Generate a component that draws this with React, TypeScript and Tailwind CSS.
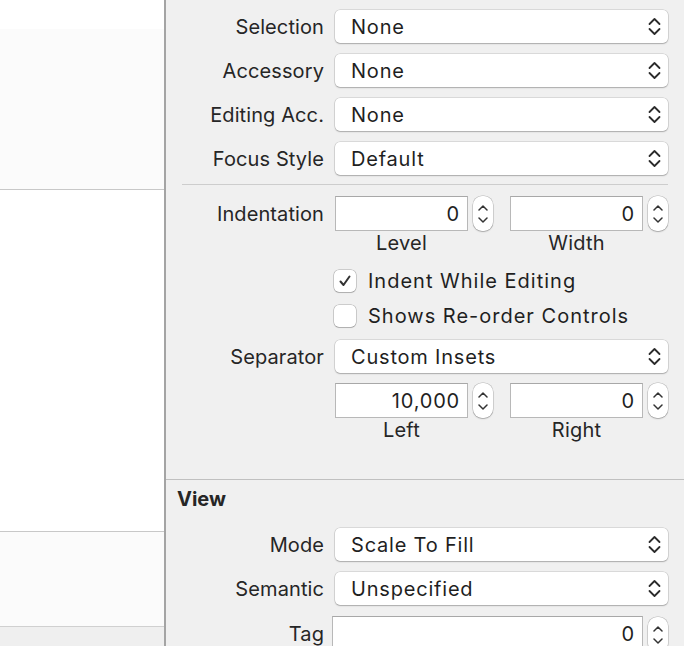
import React from "react";

const font = { fontFamily: "Inter, 'Liberation Sans', sans-serif" };

function UpDown() {
  return (
    <svg width="13" height="19" viewBox="0 0 13 19" fill="none" stroke="#2b2b2b" strokeWidth="1.8" strokeLinecap="round" strokeLinejoin="round">
      <path d="M1.5 7 L6.5 2 L11.5 7" />
      <path d="M1.5 12 L6.5 17 L11.5 12" />
    </svg>
  );
}

function Popup({ value }: { value: string }) {
  return (
    <div className="h-[33px] flex-1 bg-white rounded-[5px] shadow-[0_0_0_0.5px_rgba(0,0,0,0.18),0_1px_1.5px_rgba(0,0,0,0.22)] flex items-center pl-[16px] pr-[7px] text-[20px] tracking-[0.04em] text-[#1f1f1f]">
      <span className="flex-1">{value}</span>
      <UpDown />
    </div>
  );
}

function Stepper() {
  return (
    <div className="w-[20px] h-[35px] bg-white rounded-[9px] shadow-[0_0_0_0.5px_rgba(0,0,0,0.22),0_1px_1.5px_rgba(0,0,0,0.2)] flex flex-col items-center justify-center gap-[6px]">
      <svg width="10" height="6" viewBox="0 0 10 6" fill="none" stroke="#333" strokeWidth="1.5" strokeLinecap="round" strokeLinejoin="round">
        <path d="M1 5 L5 1 L9 5" />
      </svg>
      <svg width="10" height="6" viewBox="0 0 10 6" fill="none" stroke="#333" strokeWidth="1.5" strokeLinecap="round" strokeLinejoin="round">
        <path d="M1 1 L5 5 L9 1" />
      </svg>
    </div>
  );
}

function NumField({ value, w = "w-[133px]" }: { value: string; w?: string }) {
  return (
    <div className={`${w} h-[35px] shrink-0 bg-white border border-[#b8b8b8] border-t-[#a8a8a8] flex items-center justify-end pr-[7px] text-[20px] tracking-[0.04em] text-[#1f1f1f]`}>
      {value}
    </div>
  );
}

function Label({ children }: { children: React.ReactNode }) {
  return <div className="w-[158px] shrink-0 text-right text-[20px] tracking-[0.005em] text-[#262626]">{children}</div>;
}

function PopupRow({ label, value }: { label: string; value: string }) {
  return (
    <div className="flex items-center h-[33px] shrink-0">
      <Label>{label}</Label>
      <div className="w-[11px] shrink-0" />
      <Popup value={value} />
    </div>
  );
}

function Checkbox({ checked, label }: { checked: boolean; label: string }) {
  return (
    <div className="flex items-center h-[22px] pl-[168px] shrink-0">
      <div className="w-[22px] h-[22px] bg-white rounded-[5px] shadow-[0_0_0_0.5px_rgba(0,0,0,0.3),0_1px_1px_rgba(0,0,0,0.15)] flex items-center justify-center">
        {checked && (
          <svg width="14" height="14" viewBox="0 0 14 14" fill="none" stroke="#333" strokeWidth="2" strokeLinecap="round" strokeLinejoin="round">
            <path d="M2.5 7.5 L5.5 11 L11.5 2.5" />
          </svg>
        )}
      </div>
      <span className="ml-[12px] text-[20px] tracking-[0.05em] text-[#1f1f1f]">{label}</span>
    </div>
  );
}

function PairRow({ label, a, b, la, lb }: { label?: string; a: string; b: string; la: string; lb: string }) {
  return (
    <div className="flex flex-col shrink-0">
      <div className="flex items-center h-[35px]">
        <Label>{label ?? ""}</Label>
        <div className="w-[11px] shrink-0" />
        <NumField value={a} />
        <div className="w-[5px]" />
        <Stepper />
        <div className="w-[17px]" />
        <NumField value={b} />
        <div className="w-[5px]" />
        <Stepper />
      </div>
      <div className="flex h-[24px] items-center text-[20px] tracking-[0.01em] text-[#262626]">
        <div className="w-[169px] shrink-0" />
        <div className="w-[133px] text-center">{la}</div>
        <div className="w-[42px]" />
        <div className="w-[133px] text-center">{lb}</div>
      </div>
    </div>
  );
}

export default function App() {
  return (
    <div className="w-[684px] h-[646px] flex overflow-hidden bg-[#f0f0f0]" style={font}>
      {/* left panel */}
      <div className="w-[164px] shrink-0 flex flex-col">
        <div className="h-[29px] shrink-0 bg-white" />
        <div className="h-[161px] shrink-0 bg-[#fbfbfb] border-b border-[#c8c8c8]" />
        <div className="h-[342px] shrink-0 bg-white border-b border-[#c8c8c8]" />
        <div className="h-[95px] shrink-0 bg-[#fbfbfb] border-b border-[#d0d0d0] shadow-[0_1px_1px_rgba(0,0,0,0.06)]" />
        <div className="flex-1 bg-[#efefef]" />
      </div>
      <div className="w-[2px] shrink-0 bg-[#a4a4a4]" />
      {/* right panel */}
      <div className="flex-1 flex flex-col bg-[#f0f0f0] pr-[16px]">
        <div className="flex flex-col gap-[11px] pt-[10px] shrink-0">
          <PopupRow label="Selection" value="None" />
          <PopupRow label="Accessory" value="None" />
          <PopupRow label="Editing Acc." value="None" />
          <PopupRow label="Focus Style" value="Default" />
        </div>
        <div className="ml-[16px] mt-[9px] h-px shrink-0 bg-[#cdcdcd]" />
        <div className="mt-[11px] shrink-0">
          <PairRow label="Indentation" a="0" b="0" la="Level" lb="Width" />
        </div>
        <div className="mt-[15px] flex flex-col gap-[13px] shrink-0">
          <Checkbox checked label="Indent While Editing" />
          <Checkbox checked={false} label="Shows Re-order Controls" />
        </div>
        <div className="mt-[13px] shrink-0">
          <PopupRow label="Separator" value="Custom Insets" />
        </div>
        <div className="mt-[10px] shrink-0">
          <PairRow a="10,000" b="0" la="Left" lb="Right" />
        </div>
        <div className="-mr-[16px] mt-[37px] h-px shrink-0 bg-[#c0c0c0]" />
        <div className="pl-[11px] mt-[8px] h-[22px] shrink-0 flex items-center text-[20px] font-bold text-[#262626]">View</div>
        <div className="mt-[18px] flex flex-col gap-[11px] shrink-0">
          <PopupRow label="Mode" value="Scale To Fill" />
          <PopupRow label="Semantic" value="Unspecified" />
        </div>
        <div className="mt-[11px] flex items-center h-[35px] shrink-0">
          <Label>Tag</Label>
          <div className="w-[8px] shrink-0" />
          <NumField value="0" w="w-[311px]" />
          <div className="w-[5px] shrink-0" />
          <div className="pt-[2px] shrink-0"><Stepper /></div>
        </div>
      </div>
    </div>
  );
}
